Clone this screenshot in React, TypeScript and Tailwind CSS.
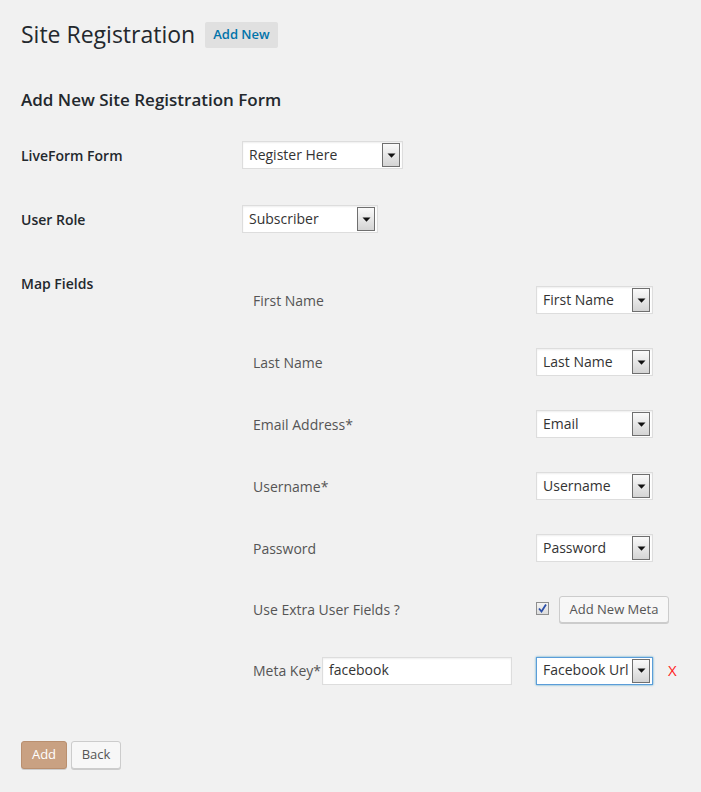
import React from "react";

const FakeSelect = ({
  value,
  width,
  focused = false,
}: {
  value: string;
  width: string;
  focused?: boolean;
}) => (
  <div
    className={`flex h-[28px] items-center justify-between bg-white pl-[6px] pr-[2px] text-[14px] text-[#333] ${width} ${
      focused
        ? "border border-[#5b9dd9] shadow-[0_0_2px_rgba(30,140,190,0.8)]"
        : "border border-[#ddd] shadow-[inset_0_1px_2px_rgba(0,0,0,0.07)]"
    }`}
  >
    <span className="truncate pb-[2px]">{value}</span>
    <span className="flex h-[24px] w-[18px] shrink-0 items-center justify-center border border-[#6f6f6f] bg-gradient-to-b from-[#fafafa] to-[#d4d4d4]">
      <svg width="9" height="5" viewBox="0 0 9 5">
        <path d="M0.5 0.5 L8.5 0.5 L4.5 4.8 Z" fill="#111" />
      </svg>
    </span>
  </div>
);

const mapFields = [
  { label: "First Name", value: "First Name", h: "h-[62px]" },
  { label: "Last Name", value: "Last Name", h: "h-[62px]" },
  { label: "Email Address*", value: "Email", h: "h-[62px]" },
  { label: "Username*", value: "Username", h: "h-[62px]" },
  { label: "Password", value: "Password", h: "h-[62px]" },
];

const App = () => {
  return (
    <div className="min-h-[792px] bg-[#f1f1f1] px-[21px] pt-[20px] font-['Open_Sans',sans-serif] text-[14px] text-[#444]">
      <div className="flex h-[29px] items-center">
        <h1 className="text-[23px] leading-[29px] text-[#23282d]">Site Registration</h1>
        <span className="ml-[10px] flex h-[26px] items-center rounded-[2px] bg-[#e0e0e0] px-[8px] text-[13px] font-semibold text-[#0073aa]">
          Add New
        </span>
      </div>

      <h3 className="mt-[40px] text-[17px] font-semibold leading-[22px] text-[#23282d]">
        Add New Site Registration Form
      </h3>

      <div className="mt-[30px] flex h-[28px] items-center">
        <div className="w-[221px] font-semibold text-[#23282d]">LiveForm Form</div>
        <FakeSelect value="Register Here" width="w-[161px]" />
      </div>

      <div className="mt-[36px] flex h-[28px] items-center">
        <div className="w-[221px] font-semibold text-[#23282d]">User Role</div>
        <FakeSelect value="Subscriber" width="w-[136px]" />
      </div>

      <div className="mt-[36px] flex">
        <div className="mt-[5px] h-[20px] w-[221px] font-semibold leading-[20px] text-[#23282d]">
          Map Fields
        </div>
        <div className="pl-[11px] text-[#555]">
          {mapFields.map((f) => (
            <div key={f.label} className={`flex items-center ${f.h}`}>
              <div className="w-[283px]">{f.label}</div>
              <FakeSelect value={f.value} width="w-[117px]" />
            </div>
          ))}
          <div className="flex h-[61px] items-center">
            <div className="w-[283px]">Use Extra User Fields ?</div>
            <div className="flex items-center">
              <span className="mt-[-3px] flex h-[13px] w-[13px] items-center justify-center border border-[#8e8e8e] bg-gradient-to-b from-[#f4f4f4] to-[#dcdcdc]">
                <svg width="9" height="9" viewBox="0 0 9 9">
                  <path d="M1 4.5 L3.5 7.5 L8 0.5" fill="none" stroke="#2c4fa8" strokeWidth="1.8" />
                </svg>
              </span>
              <span className="ml-[10px] flex h-[27px] w-[110px] items-center justify-center rounded-[3px] border border-[#ccc] bg-[#f7f7f7] text-[13px] text-[#555] shadow-[0_1px_0_#ccc]">
                Add New Meta
              </span>
            </div>
          </div>
          <div className="flex h-[61px] items-center">
            <div className="flex w-[283px] items-center">
              <span className="w-[69px]">Meta Key*</span>
              <span className="flex h-[28px] w-[190px] items-center border border-[#ddd] bg-white pb-[2px] pl-[6px] text-[#333] shadow-[inset_0_1px_2px_rgba(0,0,0,0.07)]">
                facebook
              </span>
            </div>
            <FakeSelect value="Facebook Url" width="w-[117px]" focused />
            <span className="ml-[15px] text-[15px] text-[#f22]">X</span>
          </div>
        </div>
      </div>

      <div className="mt-[40px] flex gap-[4px] pb-[22px]">
        <span className="flex h-[28px] w-[46px] items-center justify-center rounded-[3px] border border-[#b98f6f] bg-[#c9a182] text-[13px] text-white shadow-[0_1px_0_rgba(0,0,0,0.15)]">
          Add
        </span>
        <span className="flex h-[28px] w-[50px] items-center justify-center rounded-[3px] border border-[#ccc] bg-[#f7f7f7] text-[13px] text-[#555] shadow-[0_1px_0_#ccc]">
          Back
        </span>
      </div>
    </div>
  );
};

export default App;
